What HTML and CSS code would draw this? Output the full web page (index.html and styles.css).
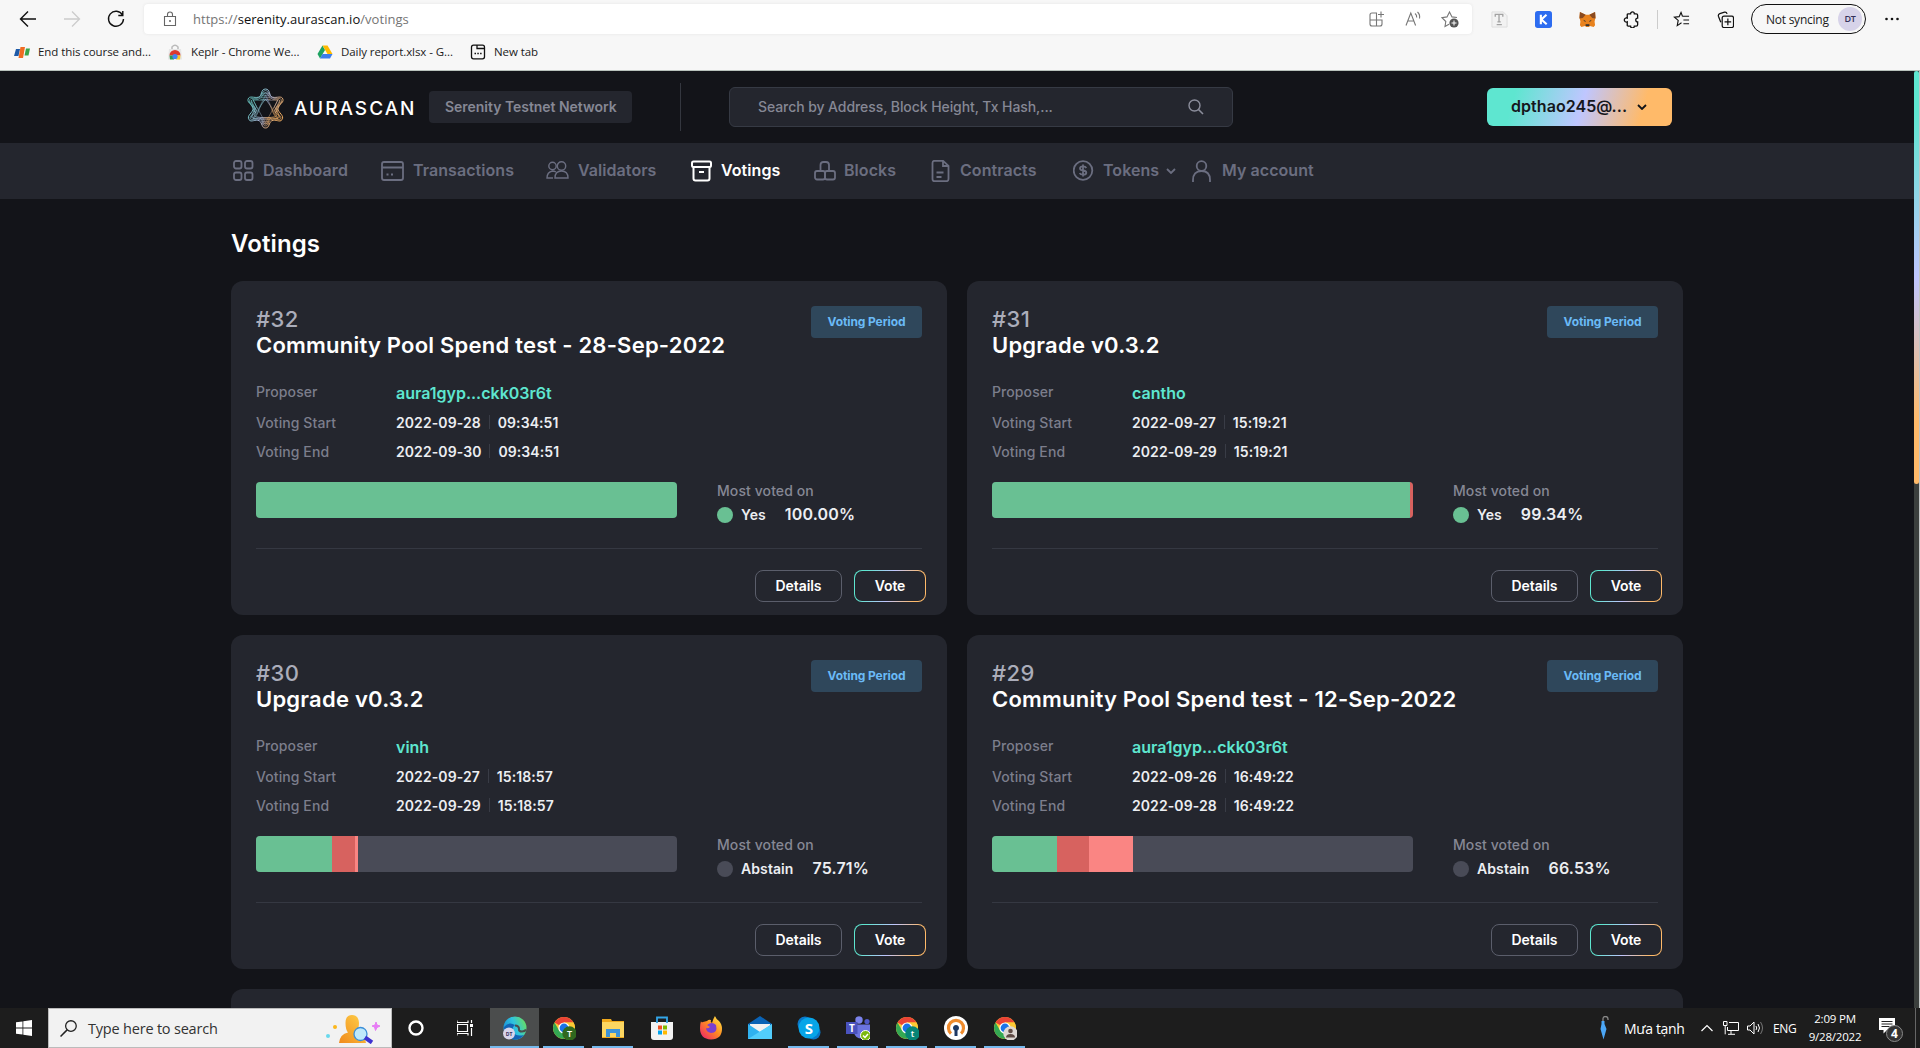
FILE: index.html
```html
<!DOCTYPE html>
<html lang="en">
<head>
<meta charset="utf-8">
<title>Aurascan - Votings</title>
<link rel="stylesheet" href="styles.css">
</head>
<body>
<svg width="0" height="0" class="defs">
  <defs>
    <linearGradient id="edgeg" x1="0" y1="0.6" x2="1" y2="0.2"><stop offset="0" stop-color="#1b8fd6"/><stop offset="0.5" stop-color="#2fc3df"/><stop offset="1" stop-color="#6be05a"/></linearGradient>
    <linearGradient id="orange" x1="0" y1="1" x2="1" y2="0"><stop offset="0" stop-color="#f08a1c"/><stop offset="1" stop-color="#ffd24a"/></linearGradient>
    <linearGradient id="logog" x1="0.1" y1="0.3" x2="0.9" y2="0.7"><stop offset="0" stop-color="#6fd0cc"/><stop offset="0.5" stop-color="#b9c3ea"/><stop offset="0.75" stop-color="#e5b58c"/><stop offset="1" stop-color="#ffb765"/></linearGradient>
    <linearGradient id="fire" x1="1" y1="0" x2="0.1" y2="1"><stop offset="0" stop-color="#fff04a"/><stop offset="0.5" stop-color="#ff8b22"/><stop offset="1" stop-color="#f0206c"/></linearGradient>
    <symbol id="chrome" viewBox="0 0 24 24">
      <circle cx="12" cy="12" r="11" fill="#fcc934"/>
      <path d="M12 12 2.5 6.5A11 11 0 0 1 21.5 6.5H12Z" fill="#ea4335"/>
      <path d="M2.5 6.5A11 11 0 0 0 12 23L16.8 14.8 7.2 14.7Z" fill="#34a853"/>
      <path d="M12 6.5H21.5A11 11 0 0 1 12 23L16.8 14.8Z" fill="#fcc934"/>
      <circle cx="12" cy="12" r="5.6" fill="#fff"/><circle cx="12" cy="12" r="4.4" fill="#1a73e8"/>
    </symbol>
  </defs>
</svg>

<header class="browser">
  <div class="toolbar">
    <svg class="b-ico back" viewBox="0 0 18 18"><path d="M17 9H1.5M9 1.5 1.5 9 9 16.5" stroke="#111" stroke-width="1.4"/></svg>
    <svg class="b-ico fwd" viewBox="0 0 18 18"><path d="M1 9h15.500M9 1.500 16.500 9 9 16.500" stroke="#ccc" stroke-width="1.300"/></svg>
    <svg class="b-ico reload" viewBox="0 0 18 18"><path d="M15.500 5A7.500 7.500 0 1 0 16.500 9M15.800 1v4.500h-4.500" stroke="#111" stroke-width="1.400"/></svg>
    <div class="address">
      <svg class="lock" viewBox="0 0 14 16"><path d="M1.500 5.500h11v9h-11zM4.500 5.500V3.500a2.500 2.500 0 0 1 5 0v2" stroke="#666" stroke-width="1.100"/><circle cx="7" cy="10" r=".9" fill="#555"/></svg>
      <span class="url">https://<b>serenity.aurascan.io</b>/votings</span>
      <svg class="a-ico" viewBox="0 0 16 16"><path d="M8 2H3q-2 0-2 2v9q0 2 2 2h8q2 0 2-2V9H1M7.500 2v13M12 .5v6M9 3.500h6" stroke="#777" stroke-width="1.100"/></svg>
      <svg class="a-ico" viewBox="0 0 16 16"><path d="M1 14.500 5.800 2l4.800 12.500M2.800 10h6M10 2.500q2 1.500 1.700 4M12.500 1q2.800 2.500 2 6.500" stroke="#777" stroke-width="1.100"/></svg>
      <svg class="a-ico last" viewBox="0 0 18 18"><path d="M8 14.200 4 16.500l.8-5L1 7.700l5-.8L8.500 2 11 6.900l5 .6" stroke="#777" stroke-width="1.100"/><circle cx="13" cy="13" r="4.600" fill="#555"/><path d="M13 10.500v5M10.500 13h5" stroke="#fff"/></svg>
    </div>
    <div class="exts">
      <svg viewBox="0 0 18 18"><path d="M1 1h12l4 4v12H1z" fill="#f2f2f2" stroke="#ddd"/><path d="M4.500 6V3.500h8V6M8.500 3.500v8M6.800 11.500h3.500M6 14.500h5.500" stroke="#a2a2a2" stroke-width="1.400"/></svg>
      <svg viewBox="0 0 16 16"><rect width="16" height="16" rx="2.500" fill="#2d6cf0"/><path d="M5.500 3.500v9M10.800 3.500 6 8l5 4.500" stroke="#fff" stroke-width="2"/></svg>
      <svg viewBox="0 0 18 18"><path d="M1 1l6 3h4l6-3 .5 6-1 4 .5 4-1.500 2-4-1-1 1h-3l-1-1-4 1L1 15l.5-4-1-4z" fill="#e8821e"/><path d="M1 1l6 3-3 3.500-3.500.5zM17 1l-6 3 3 3.500 3.500.5z" fill="#8a4a20"/><path d="M5 10l2 1M13 10l-2 1" stroke="#333"/><path d="M7 14h4v2H7z" fill="#333"/></svg>
      <svg viewBox="0 0 18 18"><path d="M5.500 3h2.500a2 2 0 0 1 4 0h2q1.500 0 1.500 1.500v3a2 2 0 0 0 0 4v3q0 1.500-1.500 1.500h-2a2 2 0 0 1-4 0H5.500Q4.500 16 4.500 15v-3.500a2.200 2.200 0 1 1 0-4V4q0-1 1-1z" stroke="#111" stroke-width="1.400"/></svg>
      <i class="sep"></i>
      <svg viewBox="0 0 18 18"><path d="M10 5.500h7M11 9.500h6M11 13.500h6M9 12.500l-4.500 3 1-5.500L1.500 6.500 6.500 6 8.500 1.500l1.500 4" stroke="#111" stroke-width="1.200"/></svg>
      <svg class="coll" viewBox="0 0 18 18"><path d="M4 12 1.500 5.500q-.5-2 1.500-2.700L8 1.200q2-.4 2.700 1.800M7.500 5.500h8q2 0 2 2v8q0 2-2 2h-8q-2 0-2-2v-8q0-2 2-2zM11.500 8v7M8 11.500h7" stroke="#111" stroke-width="1.300"/></svg>
      <div class="profile"><span>Not syncing</span><em>DT</em></div>
      <svg class="more" viewBox="0 0 14 4"><circle cx="1.500" cy="2" r="1.300" fill="#111"/><circle cx="7" cy="2" r="1.300" fill="#111"/><circle cx="12.500" cy="2" r="1.300" fill="#111"/></svg>
    </div>
  </div>
  <div class="bookmarks">
    <a class="bm1"><svg viewBox="0 0 16 16"><path d="M2 5h4L4.500 12H0z" fill="#1d5aa8"/><path d="M6.500 3h4.500L9 14H4.500z" fill="#ef6c23"/><path d="M12 4.500h4L14.500 11.500h-4z" fill="#3aa54a"/></svg><span>End this course and...</span></a>
    <a class="bm2"><svg viewBox="0 0 16 16"><path d="M2 5h12l1 10.500H1z" fill="#e6e6e6"/><path d="M5 5V3q3-3.500 6 0v2" stroke="#bbb" stroke-width="1.500"/><path d="M2.500 11.500a5.500 5.500 0 0 1 11 0z" fill="#db3a2e"/><path d="M2.500 11.500H7v4H3z" fill="#2d9b50"/><path d="M9 11.500h4.500l-.5 4H9z" fill="#f9c828"/><circle cx="8" cy="12.500" r="2.600" fill="#4285f4"/></svg><span>Keplr - Chrome We...</span></a>
    <a class="bm3"><svg viewBox="0 0 16 16"><path d="M5.500 1.500 0.500 10l2.500 4.500L8 6z" fill="#1ea362"/><path d="M5.500 1.500h5L15.500 10h-5z" fill="#ffba00"/><path d="M3 14.500h10L15.500 10h-10z" fill="#3b7ded"/></svg><span>Daily report.xlsx - G...</span></a>
    <a class="bm4"><svg viewBox="0 0 16 16"><path d="M3.500 1.200h9q2 0 2 2v9.600q0 2-2 2h-9q-2 0-2-2V3.200q0-2 2-2zM7 1.500v3h7.500" stroke="#111" stroke-width="1.300"/><path d="M4.500 9.500h1.500M7.300 9.500h1.500M10.100 9.500h1.500" stroke="#111" stroke-width="1.600"/></svg><span>New tab</span></a>
  </div>
</header>

<div class="viewport">
<div class="page">
  <div class="top">
    <svg class="logo" viewBox="0 0 36 40" fill="none" stroke="url(#logog)" stroke-width=".6">
      <path d="M18 1C23 1 21 8 25 9C29 10 34 7 35 11C36 15 30 16 30 20C30 24 37 27 34 31C32 34 28 30 24 32C21 34 22 39 18 39C14 39 15 34 12 32C8 30 4 34 2 31C-1 27 6 24 6 20C6 16 0 15 1 11C2 7 7 10 11 9C15 8 13 1 18 1Z" stroke-width=".9"/>
      <path d="M18 2.500C22 3 21 9 26 10C30 11 33 9 33.500 12C34 15 29 17 28.500 21C28 25 34 27 33 30C31 32 27 29 23 31C20 33 21 37 18 37C15 37 16 33 13 31C9 29 5 32 3 30C2 27 8 25 7.500 21C7 17 2 15 2.500 12C3 9 6 11 10 10C15 9 14 3 18 2.500Z"/>
      <path d="M18 4.500C21 5 21 10 25 11C29 12 31 10 32 13C32 16 28 18 27 21.500C27 25 32 26 31 29C29 31 26 28 22 30C20 32 20 35 18 35C16 35 16 32 14 30C10 28 7 31 5 29C4 26 9 25 9 21.500C8 18 4 16 4 13C5 10 7 12 11 11C15 10 15 5 18 4.500Z"/>
      <path d="M18 7L29.500 30H6.500ZM18 34L6 12H30Z" stroke-width=".4"/>
      <path d="M14 5h8M14 7h8M13.500 9h9M13 11h10M13 29h10M13.500 31h9M14 33h8M14.500 35h7"/>
      <path d="M18 11C20 13 22 16 24 20C25 24 27 27 28 28L21 29H15L8 28C9 27 11 24 12 20C14 16 16 13 18 11Z"/>
      <path d="M2 13 8 24M4 12 9 22M6 11.500 10 20M4 29 7.500 20M6 30 9 22M34 13 28 24M32 12 27 22M30 11.500 26 20M32 29 28.500 20M30 30 27 22"/>
    </svg>
    <span class="wordmark">AURASCAN</span>
    <span class="network">Serenity Testnet Network</span>
    <i class="rule"></i>
    <div class="search"><span>Search by Address, Block Height, Tx Hash,...</span>
      <svg viewBox="0 0 16 16" fill="none"><circle cx="6.500" cy="6.500" r="5.500" stroke="#8b8d9b" stroke-width="1.400"/><path d="M10.500 10.500 15 15" stroke="#8b8d9b" stroke-width="1.600"/></svg></div>
    <div class="user"><span>dpthao245@...</span><svg viewBox="0 0 10 6"><path d="M1 1l4 4 4-4" stroke="#111317" stroke-width="1.800"/></svg></div>
  </div>

  <nav class="nav">
    <a><svg viewBox="0 0 22 22"><rect x="1" y="1" width="7.500" height="7.500" rx="2"/><rect x="12" y="1" width="7.500" height="7.500" rx="2"/><rect x="1" y="12.500" width="7.500" height="7.500" rx="2"/><rect x="12" y="12.500" width="7.500" height="7.500" rx="2"/></svg><span>Dashboard</span></a>
    <a><svg class="wide-ico" viewBox="0 0 22 22"><path d="M2.500 2h17q2 0 2 2v14q0 2-2 2h-17q-2 0-2-2V4q0-2 2-2zM.5 7.500h21M5 14.500h2M9.500 14.500h2"/></svg><span>Transactions</span></a>
    <a><svg class="wide-ico" viewBox="0 0 22 22"><g stroke-width="1.400"><circle cx="6" cy="6" r="3.700"/><circle cx="15" cy="6" r="4.200"/><path d="M8.500 18q0-7 6.500-7t6.500 7zM6.500 18H.5q0-6 5.500-7 2 0 3.500 1"/></g></svg><span>Validators</span></a>
    <a class="active"><svg viewBox="0 0 22 22"><g stroke-width="2"><rect x="1" y="1.500" width="19" height="5.500" rx="1.500"/><path d="M2.500 7v11.500q0 2 2 2h12q2 0 2-2V7M8 12h5"/></g></svg><span>Votings</span></a>
    <a><svg viewBox="0 0 22 22"><rect x="1" y="11" width="10" height="8.500" rx="2"/><rect x="11" y="11" width="10" height="8.500" rx="2"/><path d="M6.500 11V5q0-3 3-3h2.500q3 0 3 3v6"/></svg><span>Blocks</span></a>
    <a><svg viewBox="0 0 22 22"><path d="M4.500.8h8.500l5.500 5V19q0 2.200-2 2.200h-12q-2 0-2-2.200V3q0-2.200 2-2.200zM13 1v5h5.500M6.500 12.500h7M6.500 17h5"/></svg><span>Contracts</span></a>
    <a><svg viewBox="0 0 22 22"><circle cx="10" cy="10.500" r="9.300"/><path d="M13.300 8Q12.500 6.300 10 6.300 7 6.300 7 8.300 7 10.300 10 10.500 13.300 10.700 13.300 12.700 13.300 14.700 10 14.700 7.300 14.700 6.700 13M10 4.500v12"/></svg><span>Tokens</span><svg class="caret" viewBox="0 0 10 6"><path d="M1 1l4 4 4-4"/></svg></a>
    <a><svg viewBox="0 0 22 22"><circle cx="9.500" cy="6" r="4.800"/><path d="M1 22v-2q0-9 8.500-9t8.500 9v2"/></svg><span>My account</span></a>
  </nav>

  <main class="content">
    <h1>Votings</h1>
    <div class="grid">
      <article class="card">
        <div class="head"><h2><small>#32</small>Community Pool Spend test - 28-Sep-2022</h2><span class="badge">Voting Period</span></div>
        <dl>
          <dt>Proposer</dt><dd class="addr">aura1gyp...ckk03r6t</dd>
          <dt>Voting Start</dt><dd>2022-09-28<i></i>09:34:51</dd>
          <dt>Voting End</dt><dd>2022-09-30<i></i>09:34:51</dd>
        </dl>
        <div class="result"><div class="bar"><i class="yes" style="width:100%"></i></div>
          <div class="most"><span>Most voted on</span><p><i class="dot yes"></i><b>Yes</b><strong>100.00%</strong></p></div></div>
        <div class="actions"><button>Details</button><button class="vote">Vote</button></div>
      </article>
      <article class="card">
        <div class="head"><h2><small>#31</small>Upgrade v0.3.2</h2><span class="badge">Voting Period</span></div>
        <dl>
          <dt>Proposer</dt><dd class="addr">cantho</dd>
          <dt>Voting Start</dt><dd>2022-09-27<i></i>15:19:21</dd>
          <dt>Voting End</dt><dd>2022-09-29<i></i>15:19:21</dd>
        </dl>
        <div class="result"><div class="bar"><i class="yes" style="width:99.34%"></i><i class="no" style="width:0.66%"></i></div>
          <div class="most"><span>Most voted on</span><p><i class="dot yes"></i><b>Yes</b><strong>99.34%</strong></p></div></div>
        <div class="actions"><button>Details</button><button class="vote">Vote</button></div>
      </article>
      <article class="card">
        <div class="head"><h2><small>#30</small>Upgrade v0.3.2</h2><span class="badge">Voting Period</span></div>
        <dl>
          <dt>Proposer</dt><dd class="addr">vinh</dd>
          <dt>Voting Start</dt><dd>2022-09-27<i></i>15:18:57</dd>
          <dt>Voting End</dt><dd>2022-09-29<i></i>15:18:57</dd>
        </dl>
        <div class="result"><div class="bar"><i class="yes" style="width:18.05%"></i><i class="no" style="width:5.46%"></i><i class="veto" style="width:0.78%"></i></div>
          <div class="most"><span>Most voted on</span><p><i class="dot"></i><b>Abstain</b><strong>75.71%</strong></p></div></div>
        <div class="actions"><button>Details</button><button class="vote">Vote</button></div>
      </article>
      <article class="card">
        <div class="head"><h2><small>#29</small>Community Pool Spend test - 12-Sep-2022</h2><span class="badge">Voting Period</span></div>
        <dl>
          <dt>Proposer</dt><dd class="addr">aura1gyp...ckk03r6t</dd>
          <dt>Voting Start</dt><dd>2022-09-26<i></i>16:49:22</dd>
          <dt>Voting End</dt><dd>2022-09-28<i></i>16:49:22</dd>
        </dl>
        <div class="result"><div class="bar"><i class="yes" style="width:15.45%"></i><i class="no" style="width:7.6%"></i><i class="veto" style="width:10.45%"></i></div>
          <div class="most"><span>Most voted on</span><p><i class="dot"></i><b>Abstain</b><strong>66.53%</strong></p></div></div>
        <div class="actions"><button>Details</button><button class="vote">Vote</button></div>
      </article>
      <div class="card wide"></div>
    </div>
  </main>
</div>
<div class="scroll"><i></i></div>
</div>

<footer class="taskbar">
  <div class="start"><svg viewBox="0 0 16 16"><path d="M0 2.300 6.500 1.400V7.600H0zM7.300 1.300 16 0V7.600H7.300zM0 8.400h6.500v6.200L0 13.700zM7.300 8.400H16V16l-8.700-1.300z" fill="#fff"/></svg></div>
  <div class="tsearch">
    <svg class="mag" viewBox="0 0 16 16"><circle cx="10.300" cy="5.700" r="5" stroke="#222" stroke-width="1.200"/><path d="M6.700 9.300.5 15.500" stroke="#222" stroke-width="1.400"/></svg>
    <span>Type here to search</span>
    <svg class="person" viewBox="0 0 54 30"><circle cx="2" cy="22" r="2" fill="#68d8ec"/><circle cx="9" cy="13" r="2" fill="#fcb71c"/><path d="M13 29q1-9 9-10.500-2.500-3-2.500-9.500 0-8 6.500-8T33 9q0 6-3 9.500 9 1.500 10 10.500z" fill="url(#orange)"/><circle cx="34.500" cy="20" r="6.500" fill="#bfe9fb" stroke="#3c8fd8" stroke-width="1.300"/><path d="M39 23.500l7 5" stroke="#3d32d0" stroke-width="4"/><path d="M50 8l1 3 3 1-3 1.500-1.500 3-1-3.500L46 12l3-1z" fill="#e77cf5" stroke="#e77cf5"/></svg>
  </div>
  <div class="tile"><svg class="cort" viewBox="0 0 16 16"><circle cx="8" cy="8" r="6.500" stroke="#fff" stroke-width="2.400"/></svg></div>
  <div class="tile"><svg class="cort" viewBox="0 0 16 16"><path d="M0 .5v2h11v-2M0 15.500v-2h11v2M.5 4.500h10v7H.5zM14.500 0v3M14.500 8v8" stroke="#fff" stroke-width="1.200"/><path d="M13 4h3v3h-3z" fill="#fff"/></svg></div>
  <div class="tile on cur"><svg viewBox="0 0 24 24"><circle cx="12" cy="12" r="11.500" fill="url(#edgeg)"/><path d="M1 11q5-6 11-2-4 3-2 7 3 5 11 3-5 6-12 4-8-3-8-12z" fill="#1263b5"/><path d="M12 9.500q4 0 4 3.500-.5 2.500 3 2.500 3 0 4-2" stroke="#4b4d4d" stroke-width="2"/><circle cx="6" cy="17.500" r="6" fill="#d8d4ea"/><text x="6" y="19.500" class="mini dk">DT</text></svg></div>
  <div class="tile on"><svg viewBox="0 0 24 24"><use href="#chrome"/><circle cx="17.500" cy="17.500" r="7.200" fill="#30681e"/><text x="17.500" y="20.500" class="mini8">T</text></svg></div>
  <div class="tile on"><svg viewBox="0 0 24 24"><path d="M1 3h9l1 2h12v17H1z" fill="#f0a91c"/><path d="M1 6h22v15H1z" fill="#fcd661"/><path d="M5 21v-8h14v8h-4v-4H9v4z" fill="#3d93d8"/></svg></div>
  <div class="tile"><svg viewBox="0 0 24 24"><path d="M1 6h22v15q0 3-3 3H4q-3 0-3-3z" fill="#f3f3f3"/><path d="M7 7V1.500h10V7" stroke="#33a6e8" stroke-width="1.800"/><path d="M8 9.500h4v4H8z" fill="#f25022"/><path d="M13 9.500h4v4h-4z" fill="#7fba00"/><path d="M8 14.500h4v4H8z" fill="#00a4ef"/><path d="M13 14.500h4v4h-4z" fill="#ffb900"/></svg></div>
  <div class="tile"><svg viewBox="0 0 24 24"><path d="M2 5q0 2 2 1l4-1q2-2 4-1-1 2 1 3Q14 3 16 0q1 3 4 5 3 3 3 8 0 10-11 10.500Q1 23 1 12 1 8 2 5z" fill="url(#fire)"/><path d="M8 9q5-4 9 0 2 8-5 8-5-1-5-5 2 1 4-1z" fill="#7a3fd0"/></svg></div>
  <div class="tile"><svg viewBox="0 0 24 24"><path d="M0 8 12 0l12 8v15H0z" fill="#0a63b5"/><path d="M2 8h20v8H2z" fill="#f2f2f2"/><path d="M0 8l12 8L24 8v15H0z" fill="#2fb2f0"/><path d="M0 23 24 8v15z" fill="#52cdfb"/></svg></div>
  <div class="tile on"><svg viewBox="0 0 24 24"><circle cx="8" cy="8" r="7.500" fill="#0a78c8"/><circle cx="16.500" cy="16.500" r="7" fill="#0a78c8"/><circle cx="12" cy="12" r="10.500" fill="#07a5e8"/><text x="12" y="17.500" class="sk">S</text></svg></div>
  <div class="tile on"><svg viewBox="0 0 24 24"><circle cx="13" cy="4" r="3.700" fill="#7b83eb"/><circle cx="21" cy="5.500" r="2.600" fill="#5059c9"/><path d="M8 8.500h16v10q-3 4-8 4-7 0-8-6z" fill="#6b74e0"/><path d="M0 6h11.500v12H0z" fill="#4a52bd"/><text x="5.800" y="15.500" class="tm">T</text><circle cx="19.500" cy="19.500" r="5" fill="#7bb80e" stroke="#fff"/><path d="M17 19.500l2 2 3-3.500" stroke="#fff" stroke-width="1.500"/></svg></div>
  <div class="tile on"><svg viewBox="0 0 24 24"><use href="#chrome"/><circle cx="17.500" cy="17.500" r="7.200" fill="#078476"/><text x="17.500" y="20.500" class="mini8">t</text></svg></div>
  <div class="tile on"><svg viewBox="0 0 24 24"><circle cx="12" cy="12" r="12" fill="#fff"/><path d="M7 17.500a7.500 7.500 0 1 1 10 0" stroke="#ef8b2c" stroke-width="3.200"/><path d="M10.500 20v-5.500a3 3 0 1 1 3 0V20z" fill="#1d3864"/></svg></div>
  <div class="tile on"><svg viewBox="0 0 24 24"><use href="#chrome"/><circle cx="17.500" cy="17.500" r="7.200" fill="#ded8d4"/><circle cx="17.500" cy="15" r="2.300" fill="#5f4b45"/><path d="M13 21.500q0-3.500 4.500-3.500t4.500 3.500z" fill="#5f4b45"/></svg></div>
  <div class="tray">
    <svg class="umb" viewBox="0 0 10 24"><path d="M4 6V3q0-2.500 2.500-2.500T9 3v1" stroke="#888" stroke-width="1.300"/><path d="M2.500 5h3v3l2 5-3 10.500-3-10.500 1-5z" fill="#4ba6f5"/></svg>
    <span class="wx">Mưa tạnh</span>
    <svg class="up" viewBox="0 0 12 8"><path d="M.5 7 6 1.500 11.500 7" stroke="#fff" stroke-width="1.200"/></svg>
    <svg class="net" viewBox="0 0 16 14"><path d="M6 1.500h9.500v8H4.500V6M8 9.500v3.500M5 13.300h7M.5.5H4v4H.5zM2.200 5v8.300" stroke="#fff"/></svg>
    <svg class="vol" viewBox="0 0 17 14"><path d="M.5 5H3l4-4v12L3 9H.5zM9 5q1.500 2 0 4M11 3q3 4 0 8" stroke="#fff"/><path d="M13.500 1q4 6 0 12" stroke="#777"/></svg>
    <span class="eng">ENG</span>
    <span class="clock">2:09 PM<br>9/28/2022</span>
    <svg class="note" viewBox="0 0 25 25"><path d="M0 1h16v12H8l-3.500 3.500V13H0z" fill="#fff"/><path d="M2.500 4.500h11M2.500 7h11M2.500 9.500h8" stroke="#222"/><circle cx="15.500" cy="16.500" r="8" fill="#333" stroke="#8a8a8a"/><text x="15.500" y="21" class="cnt">4</text></svg>
    <i class="desk"></i>
  </div>
</footer>
</body>
</html>
```

FILE: styles.css
```css
* { box-sizing: border-box; }
body { margin: 0; width: 1920px; height: 1048px; overflow: hidden; display: flex; flex-direction: column; background: #131419; font-family: Inter, sans-serif; }
.defs { display: block; height: 0; flex: none; }
svg { fill: none; flex: none; display: block; }
span { white-space: nowrap; }

/* browser chrome */
.browser { height: 71px; flex: none; background: #f7f7f7; border-bottom: 1px solid #b9c2bc; font-family: "Open Sans", "Noto Sans", sans-serif; color: #1b1b1b; }
.toolbar { height: 38px; display: flex; align-items: center; }
.b-ico { width: 18px; height: 18px; }
.back { margin-left: 19px; }
.fwd { margin-left: 26px; }
.reload { margin-left: 26px; margin-right: 19px; }
.address { width: 1328px; height: 30px; background: #fff; border-radius: 4px; box-shadow: 0 0 3px #e2e2e2; display: flex; align-items: center; padding-left: 19px; }
.lock { width: 14px; height: 16px; }
.url { flex: 1; margin-left: 16px; font-size: 13px; letter-spacing: 0.04px; color: #757575; }
.url b { font-weight: 400; color: #111; }
.a-ico { width: 16px; height: 16px; margin-right: 20px; }
.a-ico.last { width: 18px; height: 18px; margin-right: 13px; }
.exts { display: flex; align-items: center; margin-left: 19px; }
.exts > svg { width: 17px; height: 17px; margin-right: 27px; }
.exts .sep { width: 1px; height: 19px; background: #ccc; margin-left: -10px; margin-right: 15px; }
.exts > svg.coll { margin-right: 17px; }
.profile { width: 115px; height: 30px; border: 1px solid #111; border-radius: 15px; display: flex; align-items: center; justify-content: space-between; padding: 0 3px 0 14px; font-size: 12px; letter-spacing: -0.25px; margin-right: 19px; }
.profile em { width: 24px; height: 24px; border-radius: 50%; background: #d7d3e9; font: 600 9px/24px "Open Sans", sans-serif; text-align: center; color: #35305a; }
.exts > svg.more { width: 14px; height: 4px; margin: 0; }
.bookmarks { display: flex; height: 27px; align-items: center; padding-left: 14px; font-size: 11.5px; letter-spacing: -0.08px; }
.bookmarks a { display: flex; align-items: center; gap: 8px; }
.bookmarks svg { width: 16px; height: 16px; }
.bm1 { width: 153px; }
.bm2 { width: 150px; }
.bm3 { width: 153px; }

/* page */
.viewport { flex: 1; min-height: 0; display: flex; }
.page { flex: 1; overflow: hidden; }
.scroll { width: 6px; background: #3b3f3d; border-right: 1px solid #c0c4c4; }
.scroll i { display: block; height: 413px; border-radius: 3px; background: linear-gradient(#5ee6d0 10%, #bfc6ff 50%, #ffba69 85%); }
.top { height: 72px; display: flex; align-items: center; padding-left: 247px; }
.logo { width: 37px; height: 41px; margin-top: 3px; }
.wordmark { width: 134px; margin-left: 10px; color: #fff; font: 500 19px/24px Inter, sans-serif; letter-spacing: 2px; margin-top: 4px; }
.network { width: 203px; height: 32px; margin-left: 1px; background: #24262e; border-radius: 4px; color: #868895; font-size: 14px; font-weight: 600; line-height: 32px; padding-left: 16px; letter-spacing: -0.03px; }
.rule { width: 1px; height: 48px; margin: 0 48px; background: #34373f; }
.search { width: 504px; height: 40px; border: 1px solid #363a44; border-radius: 6px; background: #24262e; padding: 0 28px; display: flex; align-items: center; justify-content: space-between; color: #868895; font-size: 14px; font-weight: 500; letter-spacing: -0.08px; }
.search span { padding-bottom: 2px; }
.search svg { width: 16px; height: 16px; }
.user { width: 185px; height: 38px; margin-left: 254px; border-radius: 6px; display: flex; align-items: center; padding-left: 24px; gap: 10px; font-size: 16px; font-weight: 600; color: #15161c; background: linear-gradient(106deg, #5ee6d0 15%, #bfc6ff 51%, #ffba69 83%); }
.user span { padding-bottom: 2px; letter-spacing: 0.05px; }
.user svg { width: 10px; height: 6px; }
.nav { height: 56px; background: #24262e; padding-left: 233px; display: grid; grid-template-columns: 150px 165px 143px 123px 116px 143px 119px 130px; align-items: center; font-size: 16px; font-weight: 600; color: #6b6e80; letter-spacing: 0.06px; }
.nav a { display: flex; align-items: center; }
.nav span { padding-bottom: 2px; }
.nav svg { width: 22px; height: 22px; margin-right: 8px; stroke: #6b6e80; stroke-width: 1.8; }
.nav .wide-ico { width: 23px; margin-left: -2px; margin-right: 9px; }
.nav .caret { width: 10px; height: 6px; margin-left: 7px; }
.nav .active { color: #fff; }
.nav .active svg { stroke: #fff; }
.content { padding: 29px 0 0 231px; }
h1 { margin: 0; height: 53px; font-size: 24px; line-height: 32px; font-weight: 600; color: #fff; letter-spacing: 0.12px; }
.grid { display: grid; grid-template-columns: 716px 716px; gap: 20px; }
.card { height: 334px; border-radius: 12px; background: #24262e; padding: 25px; }
.wide { grid-column: span 2; }
.head { display: flex; justify-content: space-between; height: 71px; }
h2 { margin: 0; font-size: 22px; line-height: 26px; font-weight: 600; color: #fff; white-space: nowrap; letter-spacing: 0.22px; }
h2 small { display: block; font-size: 22px; font-weight: 500; color: #abadba; letter-spacing: 0.4px; }
.badge { width: 111px; height: 32px; border-radius: 4px; background: #2f475b; color: #6abaf6; font-size: 12px; font-weight: 700; line-height: 32px; text-align: center; letter-spacing: -0.1px; }
dl { margin: 0; display: grid; grid-template-columns: 140px 1fr; grid-template-rows: 31px 30px 28px; align-items: center; font-size: 14px; font-weight: 500; color: #7c7e8c; letter-spacing: 0.09px; }
dt { margin-top: -2px; }
dd { margin: -2px 0 0; font-size: 14px; font-weight: 600; color: #eceef2; display: flex; align-items: center; letter-spacing: 0.08px; }
dd i { width: 1px; height: 14px; margin: 0 8px; background: #393c46; }
dd.addr { font-size: 16px; margin: 0; color: #5ee6d0; letter-spacing: 0; }
.result { margin-top: 16px; display: flex; height: 67px; border-bottom: 1px solid #353842; }
.bar { width: 421px; height: 36px; border-radius: 4px; background: #494b57; overflow: hidden; display: flex; }
.bar .yes, .dot.yes { background: #69c093; }
.bar .no { background: #d7625f; }
.bar .veto { background: #fa8583; }
.most { margin-left: 40px; font-size: 14px; font-weight: 500; color: #868895; letter-spacing: 0.09px; }
.most span { display: block; height: 20px; line-height: 18px; }
.most p { margin: 0; display: flex; align-items: center; height: 25px; }
.dot { width: 16px; height: 16px; border-radius: 50%; background: #494b57; margin-right: 8px; }
.most b { color: #eceef2; font-weight: 600; font-size: 14px; padding-bottom: 1px; }
.most strong { margin-left: 19px; color: #eceef2; font-weight: 600; font-size: 16px; padding-bottom: 2px; letter-spacing: 0.15px; }
.actions { display: flex; justify-content: flex-end; gap: 12px; margin: 21px -4px 0 0; }
button { width: 87px; height: 32px; border: 1px solid #5b5e6b; border-radius: 8px; background: transparent; color: #fff; font: 600 14px Inter, sans-serif; padding: 0 0 2px; letter-spacing: -0.1px; }
.vote { width: 72px; border-color: transparent; background: linear-gradient(#24262e, #24262e) padding-box, linear-gradient(106deg, #5ee6d0 15%, #bfc6ff 50%, #ffba69 85%) border-box; }

/* taskbar */
.taskbar { height: 40px; flex: none; background: #1d1d1d; display: flex; color: #fff; font-family: "Open Sans", "Noto Sans", sans-serif; }
.start { width: 48px; display: grid; place-items: center; }
.start svg { width: 16px; height: 16px; }
.tsearch { width: 344px; background: #f2f2f2; border: 1px solid #bbb; display: flex; align-items: center; padding-left: 11px; color: #333; font-size: 14.5px; letter-spacing: -0.2px; }
.mag { width: 17px; height: 17px; }
.tsearch span { width: 238px; margin-left: 11px; }
.person { width: 54px; height: 30px; margin-top: 1px; }
.tile { width: 49px; display: grid; place-items: center; position: relative; }
.tile svg { width: 24px; height: 24px; }
.tile svg.cort { width: 16px; height: 16px; margin-right: 2px; }
.tile.on::after { content: ""; position: absolute; left: 4px; right: 4px; bottom: 0; height: 2px; background: #76b9ed; }
.tile.cur { background: #4b4d4d; }
.tile.cur::after { left: 0; right: 0; }
.mini, .mini8, .sk, .tm, .cnt { font: 700 5px "Open Sans", sans-serif; fill: #fff; text-anchor: middle; }
.dk { fill: #35305a; }
.mini8 { font-size: 9px; font-weight: 600; }
.sk { font-size: 15px; }
.tm { font-size: 10px; }
.cnt { font-size: 12px; }
.tray { margin-left: auto; display: flex; align-items: center; font-size: 12px; }
.umb { width: 10px; height: 24px; }
.wx { width: 77px; margin-left: 15px; font-size: 14px; letter-spacing: -0.35px; }
.up { width: 12px; height: 8px; margin-right: 10px; }
.net { width: 16px; height: 14px; margin-right: 8px; }
.vol { width: 17px; height: 14px; margin-right: 9px; }
.eng { width: 35px; letter-spacing: -0.4px; }
.clock { width: 54px; text-align: center; line-height: 18px; font-size: 11.5px; letter-spacing: -0.2px; }
.note { width: 25px; height: 25px; margin: 2px 11px 0 17px; }
.desk { width: 1px; height: 40px; background: #666; margin-right: 4px; }
```
